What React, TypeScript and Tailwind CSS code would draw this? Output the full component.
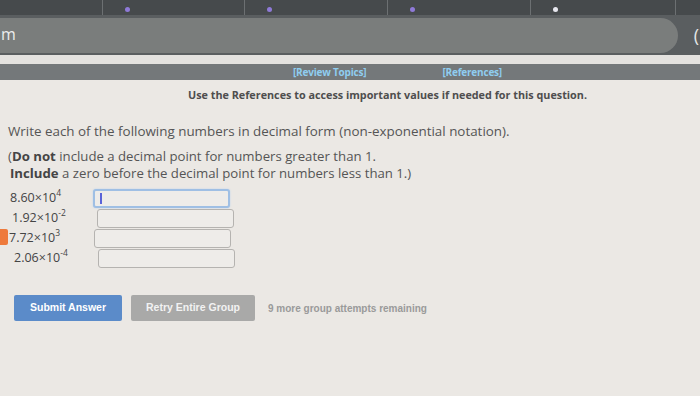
import React from 'react';

const rows = [
  { base: '8.60', exp: '4', pad: 'pl-[10px]', box: 'ml-[93px]', focused: true },
  { base: '1.92', exp: '-2', pad: 'pl-[12px]', box: 'ml-[97px]', focused: false },
  { base: '7.72', exp: '3', pad: 'pl-[9px]', box: 'ml-[94px]', focused: false },
  { base: '2.06', exp: '-4', pad: 'pl-[14px]', box: 'ml-[98px]', focused: false },
];

function TabStrip() {
  const tabs = [103, 142, 143, 143, 145];
  return (
    <div className="h-[15px] bg-[#464a4c] flex shrink-0">
      {tabs.map((w, i) => (
        <div
          key={i}
          className="h-full border-r border-[#6c7072] flex items-end"
          style={{ width: w }}
        >
          {i > 0 && (
            <span
              className={`ml-[22px] mb-[3px] w-[5px] h-[5px] rounded-full ${
                i === 4 ? 'bg-[#e8e8f0]' : 'bg-[#8f7ad8]'
              }`}
            />
          )}
        </div>
      ))}
    </div>
  );
}

export default function App() {
  return (
    <div
      className="w-[700px] h-[396px] overflow-hidden bg-[#ebe8e4] flex flex-col"
      style={{ fontFamily: '"Open Sans", "Liberation Sans", sans-serif' }}
    >
      <TabStrip />

      {/* Browser toolbar */}
      <div className="h-[40px] bg-[#5a5e60] flex items-center shrink-0">
        <div className="h-[35px] w-[678px] bg-[#7a7d7c] rounded-r-[18px] flex items-center">
          <span className="text-[#eceeee] text-[16px] leading-none ml-[1px] -mt-[3px]">m</span>
        </div>
        <span className="ml-auto mr-[1px] text-[#e5e7e8] text-[18px] leading-none">(</span>
      </div>

      <div className="h-[9px] bg-[#e4e2df] shrink-0" />

      {/* Question header bar */}
      <div className="h-[16px] bg-[#74787a] flex items-center shrink-0 text-[10px] font-bold leading-none text-[#8fcdf0]">
        <span className="ml-[293px] tracking-[-0.2px]">[Review Topics]</span>
        <span className="ml-[76px] tracking-[-0.2px]">[References]</span>
      </div>

      <p className="mt-[10px] ml-[188px] text-[10.8px] font-bold text-[#4e4e4e] leading-none">
        Use the References to access important values if needed for this question.
      </p>

      <p className="mt-[24px] ml-[8px] text-[13.4px] text-[#555] leading-none">
        Write each of the following numbers in decimal form (non-exponential notation).
      </p>

      <div className="mt-[10px] ml-[8px] text-[13.2px] text-[#555] leading-[17px]">
        <p>
          (<span className="font-bold text-[#444]">Do not</span> include a decimal point for numbers greater than 1.
        </p>
        <p className="ml-[2px]">
          <span className="font-bold text-[#444]">Include</span> a zero before the decimal point for numbers less than 1.)
        </p>
      </div>

      {/* Answer rows */}
      <div className="mt-[7px] flex flex-col gap-[1px] relative">
        {rows.map((r, i) => (
          <div key={i} className="relative flex items-center h-[19px]">
            <div className={`absolute left-0 ${r.pad} text-[12.5px] text-[#444] leading-none`}>
              {r.base}×10<sup className="text-[8.5px] -top-[6px]">{r.exp}</sup>
            </div>
            <div
              className={`w-[137px] h-[19px] rounded-[3px] bg-[#eeece9] flex items-center ${r.box} ${
                r.focused
                  ? 'border-2 border-[#9fbfe4] shadow-[0_0_2px_#b9d2ee]'
                  : 'border border-[#b5b3b0]'
              }`}
            >
              {r.focused && <span className="ml-[5px] w-[2px] h-[11px] bg-[#5a63d8]" />}
            </div>
          </div>
        ))}
        <span className="absolute left-0 top-[40px] w-[8px] h-[16px] rounded-r-[2px] bg-[#ee7a3c]" />
      </div>

      {/* Actions */}
      <div className="mt-[27px] ml-[14px] flex items-center">
        <button
          className="w-[108px] h-[26px] rounded-[2px] bg-[#5b8bc9] text-white text-[10.5px] font-bold"
          style={{ fontFamily: '"Liberation Sans", Arial, sans-serif' }}
        >
          Submit Answer
        </button>
        <button
          className="ml-[9px] w-[124px] h-[26px] rounded-[2px] bg-[#a9a9a8] text-[#f2f2f2] text-[10.5px] font-bold"
          style={{ fontFamily: '"Liberation Sans", Arial, sans-serif' }}
        >
          Retry Entire Group
        </button>
        <span
          className="ml-[13px] text-[10px] font-bold text-[#9a9a9a]"
          style={{ fontFamily: '"Liberation Sans", Arial, sans-serif' }}
        >
          9 more group attempts remaining
        </span>
      </div>
    </div>
  );
}
